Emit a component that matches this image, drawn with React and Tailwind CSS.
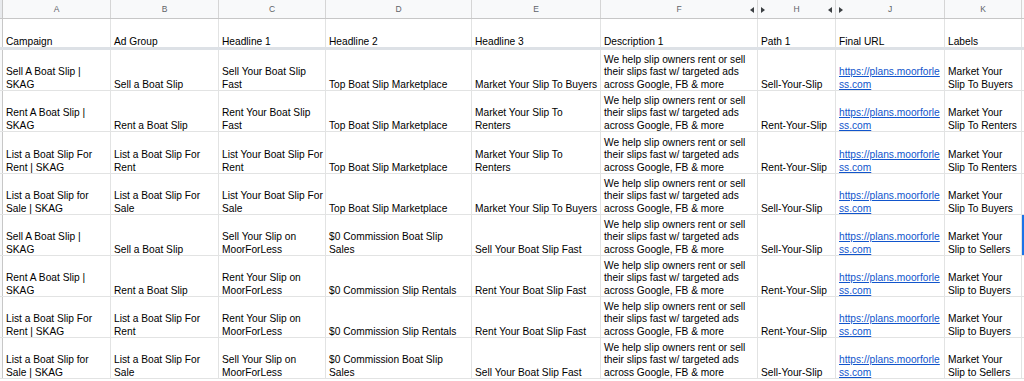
import { Fragment } from 'react'

const columns = [
  { letter: 'A', width: 'w-[108px]', label: 'Campaign' },
  { letter: 'B', width: 'w-[108px]', label: 'Ad Group' },
  { letter: 'C', width: 'w-[107px]', label: 'Headline 1' },
  { letter: 'D', width: 'w-[146px]', label: 'Headline 2' },
  { letter: 'E', width: 'w-[129px]', label: 'Headline 3' },
  { letter: 'F', width: 'w-[157px]', label: 'Description 1', arrowRight: true },
  { letter: 'H', width: 'w-[78px]', label: 'Path 1', arrowLeft: true, arrowRight: true },
  { letter: 'J', width: 'w-[109px]', label: 'Final URL', arrowLeft: true },
  { letter: 'K', width: 'w-[77px]', label: 'Labels' },
]

const desc = ['We help slip owners rent or sell', 'their slips fast w/ targeted ads', 'across Google, FB & more']
const link = ['https://plans.moorforle', 'ss.com']

const rows = [
  [['Sell A Boat Slip |', 'SKAG'], ['Sell a Boat Slip'], ['Sell Your Boat Slip', 'Fast'], ['Top Boat Slip Marketplace'], ['Market Your Slip To Buyers'], desc, ['Sell-Your-Slip'], link, ['Market Your', 'Slip To Buyers']],
  [['Rent A Boat Slip |', 'SKAG'], ['Rent a Boat Slip'], ['Rent Your Boat Slip', 'Fast'], ['Top Boat Slip Marketplace'], ['Market Your Slip To', 'Renters'], desc, ['Rent-Your-Slip'], link, ['Market Your', 'Slip To Renters']],
  [['List a Boat Slip For', 'Rent | SKAG'], ['List a Boat Slip For', 'Rent'], ['List Your Boat Slip For', 'Rent'], ['Top Boat Slip Marketplace'], ['Market Your Slip To', 'Renters'], desc, ['Rent-Your-Slip'], link, ['Market Your', 'Slip To Renters']],
  [['List a Boat Slip for', 'Sale | SKAG'], ['List a Boat Slip For', 'Sale'], ['List Your Boat Slip For', 'Sale'], ['Top Boat Slip Marketplace'], ['Market Your Slip To Buyers'], desc, ['Sell-Your-Slip'], link, ['Market Your', 'Slip To Buyers']],
  [['Sell A Boat Slip |', 'SKAG'], ['Sell a Boat Slip'], ['Sell Your Slip on', 'MoorForLess'], ['$0 Commission Boat Slip', 'Sales'], ['Sell Your Boat Slip Fast'], desc, ['Sell-Your-Slip'], link, ['Market Your', 'Slip to Sellers']],
  [['Rent A Boat Slip |', 'SKAG'], ['Rent a Boat Slip'], ['Rent Your Slip on', 'MoorForLess'], ['$0 Commission Slip Rentals'], ['Rent Your Boat Slip Fast'], desc, ['Rent-Your-Slip'], link, ['Market Your', 'Slip to Buyers']],
  [['List a Boat Slip For', 'Rent | SKAG'], ['List a Boat Slip For', 'Rent'], ['Rent Your Slip on', 'MoorForLess'], ['$0 Commission Slip Rentals'], ['Rent Your Boat Slip Fast'], desc, ['Rent-Your-Slip'], link, ['Market Your', 'Slip to Buyers']],
  [['List a Boat Slip for', 'Sale | SKAG'], ['List a Boat Slip For', 'Sale'], ['Sell Your Slip on', 'MoorForLess'], ['$0 Commission Boat Slip', 'Sales'], ['Sell Your Boat Slip Fast'], desc, ['Sell-Your-Slip'], link, ['Market Your', 'Slip to Sellers']],
]

function Arrow({ dir }) {
  return (
    <svg width="4" height="6" viewBox="0 0 4 6" className="shrink-0">
      {dir === 'left' ? <path d="M4 0L0 3L4 6Z" fill="#3c4043" /> : <path d="M0 0L4 3L0 6Z" fill="#3c4043" />}
    </svg>
  )
}

function Cell({ width, lines, isLink }) {
  return (
    <div className={`${width} shrink-0 border-r border-[#e2e3e3] flex flex-col justify-end px-[3px] overflow-hidden`}>
      <div className="-mb-[1px]">
        {lines.map((l, i) => (
          <div key={i} className={`whitespace-nowrap ${isLink ? 'text-[#1155cc] underline' : 'text-black'}`}>
            {l}
          </div>
        ))}
      </div>
    </div>
  )
}

export default function App() {
  return (
    <div className="w-[1024px] h-[381px] overflow-hidden bg-white font-['Liberation_Sans',Arial,sans-serif] text-[10.2px] leading-[12.4px]">
      {/* column letters */}
      <div className="flex h-[19px] bg-[#f8f9fa] border-b border-[#c7c7c7]">
        <div className="w-[3px] shrink-0 bg-[#e8eaed] border-r border-[#c7c7c7]" />
        {columns.map((c) => (
          <div key={c.letter} className={`${c.width} shrink-0 border-r border-[#d5d5d5] flex items-center px-[3px] pt-[1px] text-[8.5px] text-[#5f6368]`}>
            <div className="w-[6px]">{c.arrowLeft && <Arrow dir="right" />}</div>
            <div className="flex-1 text-center">{c.letter}</div>
            <div className="w-[6px] flex justify-end">{c.arrowRight && <Arrow dir="left" />}</div>
          </div>
        ))}
        <div className="flex-1" />
      </div>

      {/* header labels */}
      <div className="flex h-[28px]">
        <div className="w-[3px] shrink-0 bg-[#f8f9fa] border-r border-[#c7c7c7]" />
        {columns.map((c) => (
          <Cell key={c.letter} width={c.width} lines={[c.label]} />
        ))}
        <div className="flex-1" />
      </div>
      <div className="h-[3px] bg-[#dde1e6]" />

      {rows.map((r, ri) => (
        <div key={ri} className={`flex ${ri === 2 ? 'h-[42px]' : 'h-[41px]'} border-b border-[#e2e3e3]`}>
          <div className="w-[3px] shrink-0 bg-[#f8f9fa] border-r border-[#c7c7c7]" />
          {r.map((lines, ci) => (
            <Fragment key={ci}>
              <Cell width={columns[ci].width} lines={lines} isLink={ci === 7} />
            </Fragment>
          ))}
          <div className={`flex-1 ${ri === 4 ? 'border-l-2 border-[#1a73e8]' : ''}`} />
        </div>
      ))}
    </div>
  )
}
